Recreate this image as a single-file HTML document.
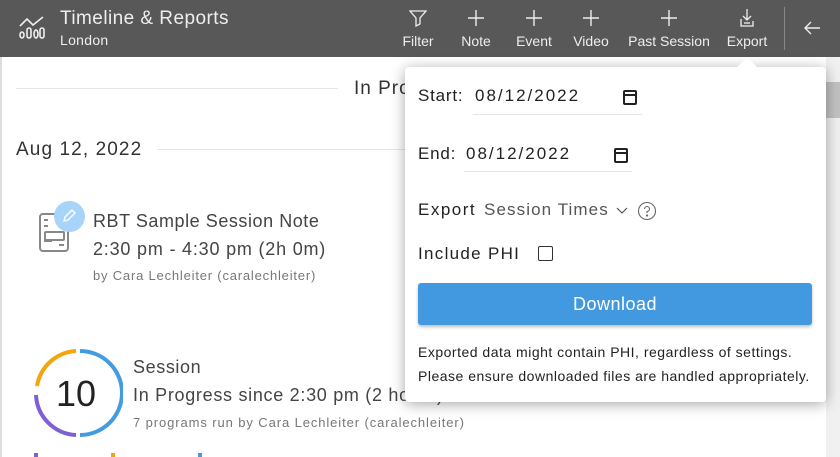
<!DOCTYPE html>
<html><head><style>
*{margin:0;padding:0;box-sizing:border-box}
body{width:840px;height:457px;overflow:hidden;background:#fff;font-family:"Liberation Sans",sans-serif;position:relative;color:#444}
.a{position:absolute;white-space:nowrap}
.hdr{position:absolute;left:0;top:0;width:840px;height:57px;background:#585858}
.lbl{position:absolute;top:33px;font-size:14px;color:#eee;transform:translateX(-50%)}
.line{position:absolute;height:1px;background:#e4e4e4}
</style></head><body>
<div class="a" style="left:0;top:57px;width:2px;height:400px;background:#ddd"></div>
<div class="hdr">
<svg class="a" style="left:18px;top:14px" width="34" height="28" viewBox="0 0 34 28" fill="none" stroke="#eee" stroke-width="1.6"><path d="M2 12 L9 5 L15 11 L25 3"/><ellipse cx="4" cy="21" rx="2" ry="3"/><rect x="9" y="14" width="4" height="10" rx="2"/><ellipse cx="18" cy="20" rx="2" ry="4"/><rect x="22" y="14" width="4" height="10" rx="2"/></svg>
<div class="a" style="left:60px;top:8px;font-size:19px;color:#eee;letter-spacing:.45px">Timeline &amp; Reports</div>
<div class="a" style="left:60px;top:32px;font-size:14px;color:#eee;letter-spacing:.3px">London</div>
<svg class="a" style="left:409px;top:9px" width="18" height="18" viewBox="0 0 18 18" fill="none" stroke="#eee" stroke-width="1.3"><path d="M1 2 H17 L11 9 V15 L7 17 V9 Z"/></svg>
<div class="lbl" style="left:418px">Filter</div>
<svg class="a" style="left:467px;top:9px" width="18" height="18" stroke="#eee" stroke-width="1.4"><path d="M9 1V17M1 9H17"/></svg><div class="lbl" style="left:476px">Note</div>
<svg class="a" style="left:525px;top:9px" width="18" height="18" stroke="#eee" stroke-width="1.4"><path d="M9 1V17M1 9H17"/></svg><div class="lbl" style="left:534px">Event</div>
<svg class="a" style="left:582px;top:9px" width="18" height="18" stroke="#eee" stroke-width="1.4"><path d="M9 1V17M1 9H17"/></svg><div class="lbl" style="left:591px">Video</div>
<svg class="a" style="left:660px;top:9px" width="18" height="18" stroke="#eee" stroke-width="1.4"><path d="M9 1V17M1 9H17"/></svg><div class="lbl" style="left:669px">Past Session</div>
<svg class="a" style="left:737px;top:8px" width="20" height="20" viewBox="0 0 20 20" fill="none" stroke="#eee" stroke-width="1.3"><path d="M10 1V12M6 8L10 12L14 8M4 11V18H16V13"/><path d="M7 15H13"/></svg><div class="lbl" style="left:747px">Export</div>
<div class="a" style="left:784px;top:7px;width:1px;height:43px;background:#888"></div>
<svg class="a" style="left:803px;top:20px" width="18" height="16" viewBox="0 0 18 16" fill="none" stroke="#eee" stroke-width="1.4"><path d="M17 8H2M8 2L2 8L8 14"/></svg>
</div>
<div class="line" style="left:16px;top:88px;width:322px"></div>
<div class="a" style="left:354px;top:78px;font-size:19px;color:#333;letter-spacing:1px">In Progress</div>
<div class="a" style="left:16px;top:139px;font-size:19px;color:#333;letter-spacing:1.1px">Aug 12, 2022</div>
<div class="line" style="left:157px;top:149px;width:260px"></div>
<svg class="a" style="left:38px;top:210px" width="32" height="44" viewBox="0 0 32 44" fill="none" stroke="#888" stroke-width="2"><rect x="2" y="4" width="28" height="37" rx="3"/><path d="M6 10H10M6 16H10M6 31H14M21 35H26"/><rect x="7" y="22" width="19" height="8" rx="1"/></svg>
<div class="a" style="left:54px;top:201px;width:31px;height:31px;border-radius:50%;background:#a9d4fa"></div>
<svg class="a" style="left:61px;top:208px" width="16" height="16" viewBox="0 0 16 16" fill="none" stroke="#fff" stroke-width="1.3"><path d="M3 13L4 9L11 2L14 5L7 12Z"/></svg>
<div class="a" style="left:93px;top:211px;font-size:18px;letter-spacing:.55px">RBT Sample Session Note</div>
<div class="a" style="left:93px;top:239px;font-size:18px;letter-spacing:.8px">2:30 pm - 4:30 pm (2h 0m)</div>
<div class="a" style="left:93px;top:268px;font-size:13px;color:#777;letter-spacing:.8px">by Cara Lechleiter (caralechleiter)</div>
<svg class="a" style="left:33px;top:348px" width="90" height="90" viewBox="0 0 90 90" fill="none" stroke-width="4"><path d="M47 3 A42 42 0 0 1 47 87" stroke="#449be0"/><path d="M43 87 A42 42 0 0 1 3 47" stroke="#7e5fd6"/><path d="M4 38 A42 42 0 0 1 43 3" stroke="#f5a50c"/></svg>
<div class="a" style="left:56px;top:373px;font-size:36px;color:#222">10</div>
<div class="a" style="left:133px;top:357px;font-size:18px;letter-spacing:.6px">Session</div>
<div class="a" style="left:133px;top:385px;font-size:18px;letter-spacing:.7px">In Progress since 2:30 pm (2 hours)</div>
<div class="a" style="left:133px;top:415px;font-size:13px;color:#777;letter-spacing:.9px">7 programs run by Cara Lechleiter (caralechleiter)</div>
<div class="a" style="left:34px;top:453px;width:4px;height:4px;background:#7e5fd6"></div>
<div class="a" style="left:111px;top:453px;width:4px;height:4px;background:#f5a50c"></div>
<div class="a" style="left:198px;top:453px;width:4px;height:4px;background:#449be0"></div>
<div class="a" style="left:826px;top:57px;width:14px;height:400px;background:#f0f0f0"></div>
<div class="a" style="left:826px;top:82px;width:14px;height:36px;background:#c1c1c1"></div>
<div class="a" style="left:405px;top:67px;width:421px;height:335px;background:#fff;border-radius:4px;box-shadow:0 2px 14px rgba(0,0,0,.35)"></div>
<div class="a" style="left:740px;top:60px;width:14px;height:14px;background:#fff;transform:rotate(45deg)"></div>
<div class="a" style="left:418px;top:86px;font-size:17px;color:#222;letter-spacing:.8px">Start:</div>
<div class="a" style="left:475px;top:86px;font-size:17px;color:#222;letter-spacing:2px">08/12/2022</div>
<div class="line" style="left:473px;top:114px;width:169px"></div>
<svg class="a" style="left:622px;top:88px" width="16" height="18" viewBox="0 0 16 18" fill="none" stroke="#222" stroke-width="2"><rect x="2" y="3" width="12" height="13" rx="1"/><path d="M2 7H14"/></svg>
<div class="a" style="left:418px;top:144px;font-size:17px;color:#222;letter-spacing:.8px">End:</div>
<div class="a" style="left:466px;top:144px;font-size:17px;color:#222;letter-spacing:2px">08/12/2022</div>
<div class="line" style="left:464px;top:171px;width:168px"></div>
<svg class="a" style="left:613px;top:146px" width="16" height="18" viewBox="0 0 16 18" fill="none" stroke="#222" stroke-width="2"><rect x="2" y="3" width="12" height="13" rx="1"/><path d="M2 7H14"/></svg>
<div class="a" style="left:418px;top:200px;font-size:17px;color:#222;letter-spacing:1.5px">Export</div>
<div class="a" style="left:484px;top:200px;font-size:17px;color:#555;letter-spacing:1.1px">Session Times</div>
<svg class="a" style="left:615px;top:204px" width="14" height="12" fill="none" stroke="#555" stroke-width="1.2"><path d="M2 4L7 9L12 4"/></svg>
<svg class="a" style="left:637px;top:201px" width="20" height="20" viewBox="0 0 20 20" fill="none" stroke="#666" stroke-width="1.1"><circle cx="10" cy="10" r="8.5"/><path d="M7.5 8A2.5 2.5 0 1 1 10 10.5V12"/><circle cx="10" cy="14.5" r=".6" fill="#666"/></svg>
<div class="a" style="left:418px;top:244px;font-size:17px;color:#222;letter-spacing:1.3px">Include PHI</div>
<div class="a" style="left:538px;top:246px;width:15px;height:15px;border:1.5px solid #333;border-radius:2px"></div>
<div class="a" style="left:418px;top:283px;width:394px;height:42px;background:#4399e0;border-radius:3px;box-shadow:0 2px 3px rgba(0,0,0,.25);color:#fff;font-size:18px;text-align:center;line-height:42px;letter-spacing:.5px">Download</div>
<div class="a" style="left:418px;top:344px;font-size:14px;color:#222;letter-spacing:.5px">Exported data might contain PHI, regardless of settings.</div>
<div class="a" style="left:418px;top:368px;font-size:14px;color:#222;letter-spacing:.5px">Please ensure downloaded files are handled appropriately.</div>
</body></html>
